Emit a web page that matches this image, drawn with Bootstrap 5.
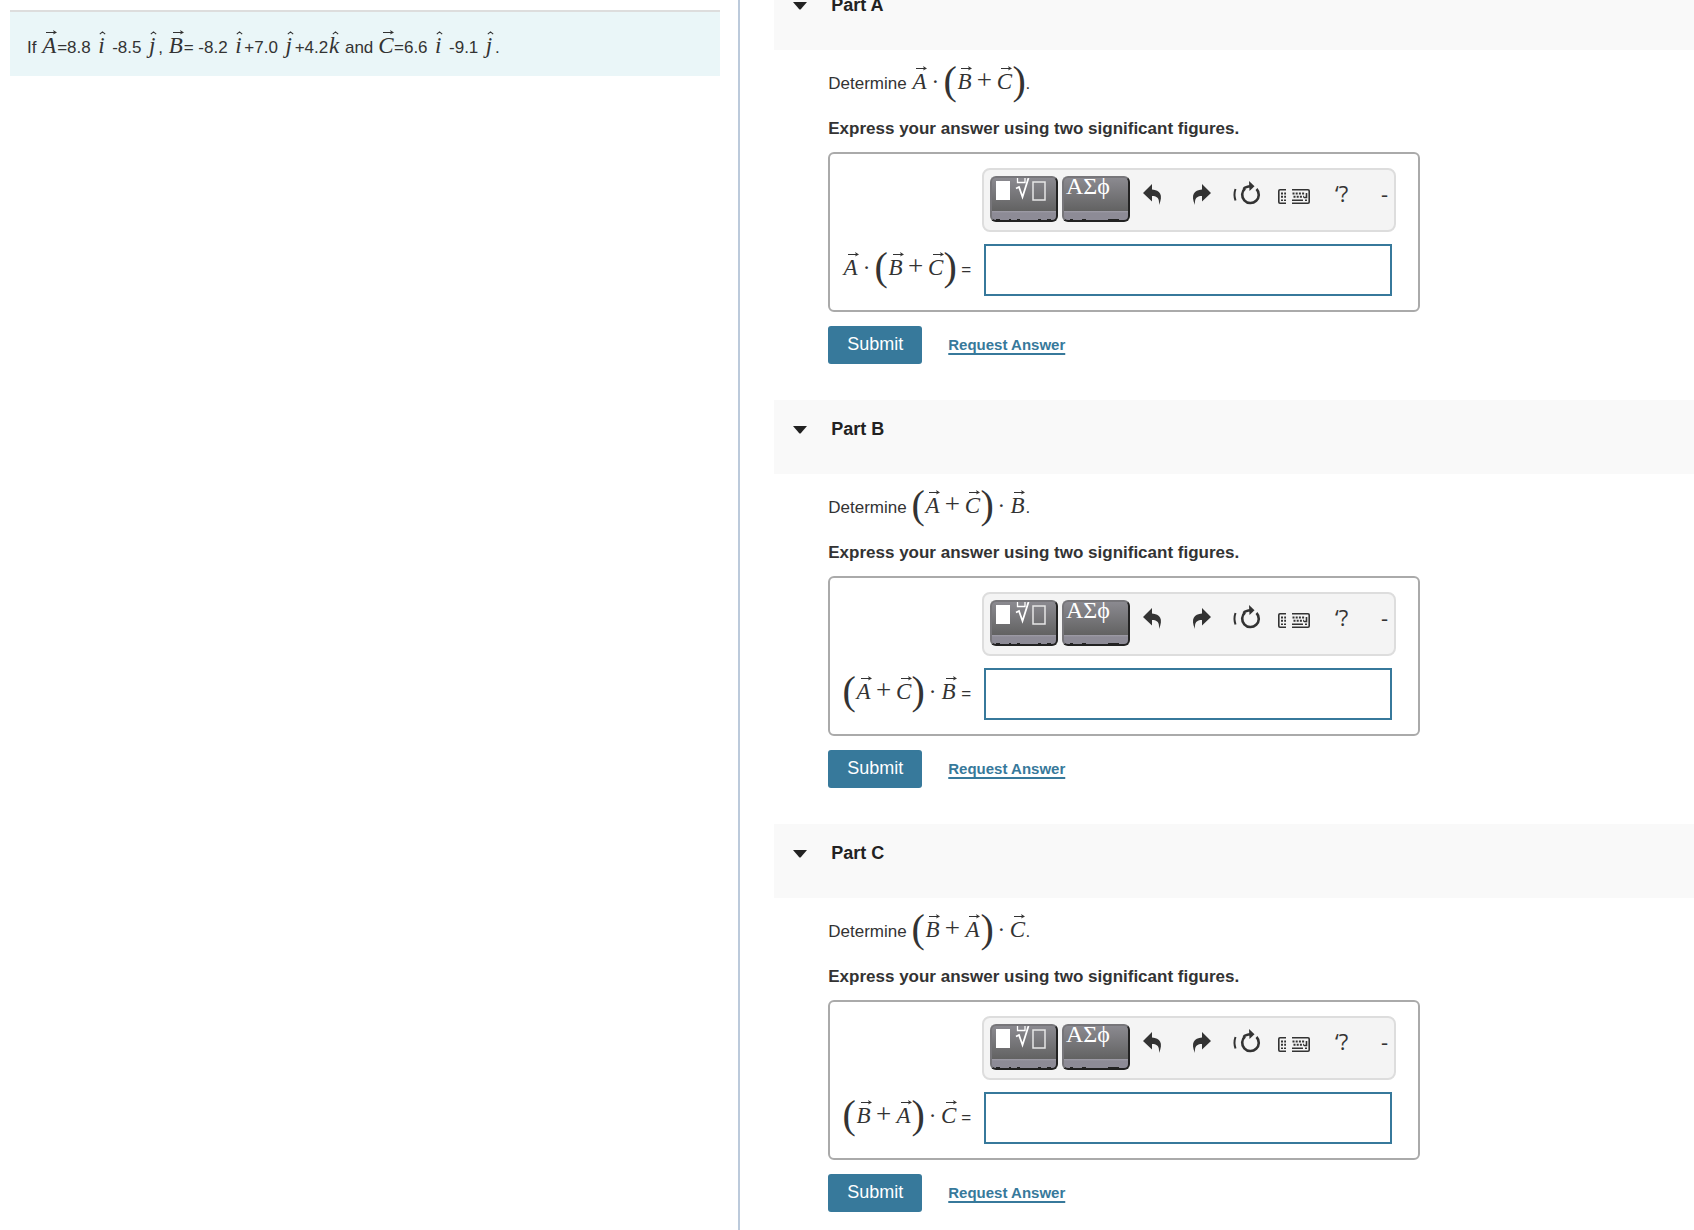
<!DOCTYPE html>
<html lang="en">
<head>
<meta charset="utf-8">
<meta name="viewport" content="width=device-width, initial-scale=1">
<title>Vector dot products</title>
<link href="https://cdn.jsdelivr.net/npm/bootstrap@5.3.0/dist/css/bootstrap.min.css" rel="stylesheet">
<style>
body{font-family:"Liberation Sans",Arial,sans-serif;font-size:17px;color:#333;background:#fff}
.problem-pane{flex:0 0 43.7%;border-right:2px solid #bccadb;padding:10px 18px 0 10px}
.given{background:#eaf6f8;border-top:2px solid #ddd;padding:14px 16px 6px 17px;line-height:44px}
.parts-pane{flex:1 1 0;min-width:0;padding-left:34px}
/* the list is scrolled a little past its first header */
.parts-list{margin-top:-24px}
.part-head{background:#f9f9f9;height:74px;padding:16px 19px;gap:24px;color:#222}
.part-head h2{font-size:18px;font-weight:700;line-height:26px;margin:0}
.caret{width:14px;height:9px;fill:#222;margin-top:9px}
.part-body{padding:12px 24px 36px 54px}
.part-item:last-child .part-body{padding-bottom:16px}
.part-body p{line-height:44px;margin:0}
.part-body p.fw-bold{line-height:46px}
.answer-box{border:2px solid #aaa;border-radius:6px;max-width:592px;padding:14px 22px 14px 0;display:grid;grid-template-columns:152px minmax(0,1fr);row-gap:12px}
.tools{grid-column:2;height:64px;border:2px solid #ddd;border-radius:8px;background:#f4f4f4;padding:6px}
.tool-key{width:68px;height:46px;padding:0;overflow:hidden;border:2px solid;border-color:#77767a #222 #222 #77767a;border-radius:6px;background:linear-gradient(#8b8a90,#626262 33px,#a09ea8 33px,#8d8b96 35px);flex:none}
.tool-key + .tool-key{margin-left:4px}
.tool-key svg,.tool-icon svg{display:block}
.tool-icon{width:48px;height:46px;padding:0;border:0;background:none;flex:none;overflow:hidden}
.tool-icon.slim{width:18px}
.greek{font-family:"Liberation Serif",serif;font-size:24px;fill:#fff}
.hint{font-family:"Open Sans",sans-serif;font-size:22px;fill:#333}
.answer-label{line-height:52px;text-align:right;padding-right:11px;white-space:nowrap}
.answer-input{height:52px;border:2px solid #37799b;border-radius:0;margin:0 4px 0 2px;width:auto}
.actions{margin-top:14px;gap:26px}
.btn-submit{width:94px;height:38px;padding:0 0 2px;line-height:34px;font-size:18px;border-radius:3px;color:#fff;background:#37799b;border:0}
.btn-submit:hover{background:#2b627e;color:#fff}
.request{font-size:15px;font-weight:700;color:#37799b;text-decoration-thickness:2px;text-underline-offset:3px}
/* maths */
.mv,.mh{position:relative;display:inline-block;font-family:"Liberation Serif",serif;font-style:italic;font-size:23px;line-height:24px;text-align:center}
.mv{width:16px}
.mh{width:12px}
.mv svg{position:absolute;left:5px;top:-4px;width:11px;height:5px}
.mh svg{position:absolute;left:4px;top:-3px;width:7px;height:4px}
.par{font-family:"Liberation Serif",serif;font-size:40px;line-height:0;vertical-align:-5px;display:inline-block;width:13px;text-align:center}
.op{display:inline-block;width:24px;text-align:center;font-family:"Liberation Serif",serif;font-size:27px;line-height:24px}
.dot{display:inline-block;width:16px;text-align:center;font-family:"Liberation Serif",serif;font-size:23px;line-height:24px}
</style>
<script src="https://cdn.jsdelivr.net/npm/bootstrap@5.3.0/dist/js/bootstrap.bundle.min.js"></script>
</head>
<body>
<svg class="d-none" aria-hidden="true">
  <symbol id="arrow" viewBox="0 0 11 5"><path d="M0 2.5H9" stroke="#333" stroke-width="1"/><path d="M7 0L11 2.5 7 4.5 8 2.5Z" fill="#333"/></symbol>
  <symbol id="hat" viewBox="0 0 7 4"><path d="M.8 3.2L3.5 .9 6.2 3.2" fill="none" stroke="#333" stroke-width="1.1"/></symbol>
  <symbol id="caret" viewBox="0 0 14 9"><path d="M0 1H14L8 8Q7 9 6 8Z"/></symbol>
  <symbol id="root" viewBox="0 0 64 42">
    <path d="M4 3H18V22H4Z" fill="#fff"/>
    <path d="M24 10.500L27 9 30.500 19 36.500 0" fill="none" stroke="#fff" stroke-width="1.8"/>
    <path d="M25.500 0V4.500H33V0" fill="none" stroke="#fff" stroke-width="1.3"/>
    <path d="M41 4H53V22H41Z" fill="none" stroke="#e6e6e6" stroke-width="1.5"/>
    <path d="M4 41.5H8M17 41.5H19M25 41.5H28M46 41.5H49M55 41.5H59" stroke="#222" stroke-width="1"/>
  </symbol>
  <symbol id="undo" viewBox="0 0 48 46"><path d="M13 17L22 8V13.500C30 14 33.500 19 29 29 29.500 22.500 27.500 20 22 20V25.500Z" fill="#333"/></symbol>
  <symbol id="redo" viewBox="0 0 48 46"><path d="M33 17L24 8V13.500C16 14 12.500 19 17 29 16.500 22.500 18.500 20 24 20V25.500Z" fill="#333"/></symbol>
  <symbol id="reset" viewBox="0 0 48 46">
    <path d="M9.5 13Q7.500 18.500 9.5 24.500" fill="none" stroke="#333" stroke-width="2"/>
    <path d="M19 12.500A8.300 8.300 0 1 0 30.500 13" fill="none" stroke="#333" stroke-width="2.6"/>
    <path d="M17.500 13Q19.500 10.500 25 10.300" fill="none" stroke="#333" stroke-width="2.4"/>
    <path d="M23 5L28.500 10.300 23.500 15Z" fill="#333"/>
  </symbol>
  <symbol id="keys" viewBox="0 0 48 46">
    <path d="M12 13.800H6Q4.800 13.800 4.800 15V26Q4.800 27.200 6 27.200H12M18 13.800H34Q35.200 13.800 35.200 15V26Q35.200 27.200 34 27.200H18" fill="none" stroke="#333" stroke-width="1.6"/>
    <path d="M7 17.500H12M18.500 17.500H31" stroke="#333" stroke-width="2" stroke-dasharray="2 1.2"/>
    <path d="M7 20.700H12M19.500 20.700H30" stroke="#333" stroke-width="2" stroke-dasharray="2 1.2"/>
    <path d="M7 24.200H9M10 24.200H12M18 24.200H29M31 24.200H33M32.500 17V21.500H30" fill="none" stroke="#333" stroke-width="1.6"/>
  </symbol>
</svg>

<main class="d-flex min-vh-100">
  <section class="problem-pane">
    <div class="given">If <span class="mv">A<svg><use href="#arrow"/></svg></span>=8.8 <span class="mh">i<svg><use href="#hat"/></svg></span> -8.5 <span class="mh">j<svg><use href="#hat"/></svg></span>, <span class="mv">B<svg><use href="#arrow"/></svg></span>= -8.2 <span class="mh">i<svg><use href="#hat"/></svg></span>+7.0 <span class="mh">j<svg><use href="#hat"/></svg></span>+4.2<span class="mh">k<svg><use href="#hat"/></svg></span> and <span class="mv">C<svg><use href="#arrow"/></svg></span>=6.6 <span class="mh">i<svg><use href="#hat"/></svg></span> -9.1 <span class="mh">j<svg><use href="#hat"/></svg></span>.</div>
  </section>

  <section class="parts-pane">
    <div class="parts-list">

      <article class="part-item">
        <header class="part-head d-flex align-items-start"><svg class="caret"><use href="#caret"/></svg><h2>Part A</h2></header>
        <div class="part-body">
          <p>Determine <span class="mv">A<svg><use href="#arrow"/></svg></span><span class="dot">·</span><span class="par">(</span><span class="mv">B<svg><use href="#arrow"/></svg></span><span class="op">+</span><span class="mv">C<svg><use href="#arrow"/></svg></span><span class="par">)</span>.</p>
          <p class="fw-bold">Express your answer using two significant figures.</p>
          <div class="answer-box">
            <div class="tools d-flex">
              <button type="button" class="tool-key" aria-label="Templates"><svg width="64" height="42"><use href="#root"/></svg></button>
              <button type="button" class="tool-key" aria-label="Symbols"><svg width="64" height="42"><text class="greek" x="2" y="16">ΑΣϕ</text><path d="M6 41.5H9M18 41.5H22M44 41.5H55" stroke="#222"/></svg></button>
              <button type="button" class="tool-icon" aria-label="Undo"><svg width="48" height="46"><use href="#undo"/></svg></button>
              <button type="button" class="tool-icon" aria-label="Redo"><svg width="48" height="46"><use href="#redo"/></svg></button>
              <button type="button" class="tool-icon" aria-label="Reset"><svg width="48" height="46"><use href="#reset"/></svg></button>
              <button type="button" class="tool-icon" aria-label="Keyboard shortcuts"><svg width="48" height="46"><use href="#keys"/></svg></button>
              <button type="button" class="tool-icon" aria-label="Help"><svg width="48" height="46"><text class="hint" x="13" y="26">‘?</text></svg></button>
              <button type="button" class="tool-icon slim" aria-label="More"><svg width="18" height="46"><text class="hint" x="11" y="26">-</text></svg></button>
            </div>
            <label class="answer-label" for="ansA"><span class="mv">A<svg><use href="#arrow"/></svg></span><span class="dot">·</span><span class="par">(</span><span class="mv">B<svg><use href="#arrow"/></svg></span><span class="op">+</span><span class="mv">C<svg><use href="#arrow"/></svg></span><span class="par">)</span> =</label>
            <input class="form-control answer-input" id="ansA" type="text">
          </div>
          <div class="actions d-flex align-items-center"><button type="button" class="btn btn-submit">Submit</button><a class="request" href="#">Request Answer</a></div>
        </div>
      </article>

      <article class="part-item">
        <header class="part-head d-flex align-items-start"><svg class="caret"><use href="#caret"/></svg><h2>Part B</h2></header>
        <div class="part-body">
          <p>Determine <span class="par">(</span><span class="mv">A<svg><use href="#arrow"/></svg></span><span class="op">+</span><span class="mv">C<svg><use href="#arrow"/></svg></span><span class="par">)</span><span class="dot">·</span><span class="mv">B<svg><use href="#arrow"/></svg></span>.</p>
          <p class="fw-bold">Express your answer using two significant figures.</p>
          <div class="answer-box">
            <div class="tools d-flex">
              <button type="button" class="tool-key" aria-label="Templates"><svg width="64" height="42"><use href="#root"/></svg></button>
              <button type="button" class="tool-key" aria-label="Symbols"><svg width="64" height="42"><text class="greek" x="2" y="16">ΑΣϕ</text><path d="M6 41.5H9M18 41.5H22M44 41.5H55" stroke="#222"/></svg></button>
              <button type="button" class="tool-icon" aria-label="Undo"><svg width="48" height="46"><use href="#undo"/></svg></button>
              <button type="button" class="tool-icon" aria-label="Redo"><svg width="48" height="46"><use href="#redo"/></svg></button>
              <button type="button" class="tool-icon" aria-label="Reset"><svg width="48" height="46"><use href="#reset"/></svg></button>
              <button type="button" class="tool-icon" aria-label="Keyboard shortcuts"><svg width="48" height="46"><use href="#keys"/></svg></button>
              <button type="button" class="tool-icon" aria-label="Help"><svg width="48" height="46"><text class="hint" x="13" y="26">‘?</text></svg></button>
              <button type="button" class="tool-icon slim" aria-label="More"><svg width="18" height="46"><text class="hint" x="11" y="26">-</text></svg></button>
            </div>
            <label class="answer-label" for="ansB"><span class="par">(</span><span class="mv">A<svg><use href="#arrow"/></svg></span><span class="op">+</span><span class="mv">C<svg><use href="#arrow"/></svg></span><span class="par">)</span><span class="dot">·</span><span class="mv">B<svg><use href="#arrow"/></svg></span> =</label>
            <input class="form-control answer-input" id="ansB" type="text">
          </div>
          <div class="actions d-flex align-items-center"><button type="button" class="btn btn-submit">Submit</button><a class="request" href="#">Request Answer</a></div>
        </div>
      </article>

      <article class="part-item">
        <header class="part-head d-flex align-items-start"><svg class="caret"><use href="#caret"/></svg><h2>Part C</h2></header>
        <div class="part-body">
          <p>Determine <span class="par">(</span><span class="mv">B<svg><use href="#arrow"/></svg></span><span class="op">+</span><span class="mv">A<svg><use href="#arrow"/></svg></span><span class="par">)</span><span class="dot">·</span><span class="mv">C<svg><use href="#arrow"/></svg></span>.</p>
          <p class="fw-bold">Express your answer using two significant figures.</p>
          <div class="answer-box">
            <div class="tools d-flex">
              <button type="button" class="tool-key" aria-label="Templates"><svg width="64" height="42"><use href="#root"/></svg></button>
              <button type="button" class="tool-key" aria-label="Symbols"><svg width="64" height="42"><text class="greek" x="2" y="16">ΑΣϕ</text><path d="M6 41.5H9M18 41.5H22M44 41.5H55" stroke="#222"/></svg></button>
              <button type="button" class="tool-icon" aria-label="Undo"><svg width="48" height="46"><use href="#undo"/></svg></button>
              <button type="button" class="tool-icon" aria-label="Redo"><svg width="48" height="46"><use href="#redo"/></svg></button>
              <button type="button" class="tool-icon" aria-label="Reset"><svg width="48" height="46"><use href="#reset"/></svg></button>
              <button type="button" class="tool-icon" aria-label="Keyboard shortcuts"><svg width="48" height="46"><use href="#keys"/></svg></button>
              <button type="button" class="tool-icon" aria-label="Help"><svg width="48" height="46"><text class="hint" x="13" y="26">‘?</text></svg></button>
              <button type="button" class="tool-icon slim" aria-label="More"><svg width="18" height="46"><text class="hint" x="11" y="26">-</text></svg></button>
            </div>
            <label class="answer-label" for="ansC"><span class="par">(</span><span class="mv">B<svg><use href="#arrow"/></svg></span><span class="op">+</span><span class="mv">A<svg><use href="#arrow"/></svg></span><span class="par">)</span><span class="dot">·</span><span class="mv">C<svg><use href="#arrow"/></svg></span> =</label>
            <input class="form-control answer-input" id="ansC" type="text">
          </div>
          <div class="actions d-flex align-items-center"><button type="button" class="btn btn-submit">Submit</button><a class="request" href="#">Request Answer</a></div>
        </div>
      </article>

    </div>
  </section>
</main>
</body>
</html>
